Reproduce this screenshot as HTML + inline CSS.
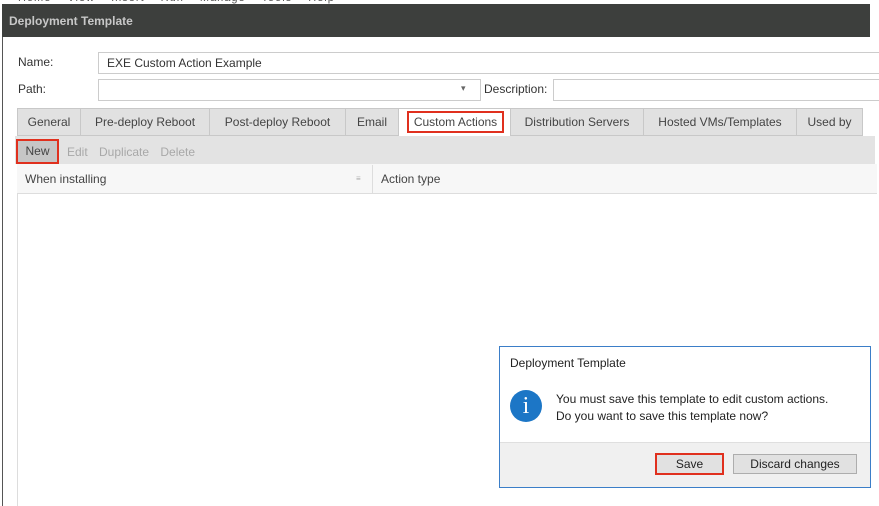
<!DOCTYPE html>
<html><head><style>
*{box-sizing:border-box;margin:0;padding:0}
body{width:879px;height:506px;background:#fff;font-family:"Liberation Sans",sans-serif;font-size:12px;color:#333;position:relative;overflow:hidden}
.a{position:absolute}
.tab{position:absolute;top:108px;height:28px;background:#e1e1e1;border:1px solid #c8c8c8;text-align:center;line-height:26px;color:#444}
</style></head><body>
<div class="a" style="left:0;top:0;width:879px;height:4px;overflow:hidden"><div style="position:absolute;top:-8px;left:18px;font-size:11px;color:#555;letter-spacing:1px;word-spacing:12px">Home View Insert Run Manage Tools Help</div></div>
<div class="a" style="left:2px;top:4px;width:868px;height:33px;background:#3d3f3d;color:#c8c8c8;font-weight:bold;font-size:12px;line-height:34px;padding-left:7px">Deployment Template</div>
<div class="a" style="left:2px;top:37px;width:1px;height:469px;background:#555"></div>
<div class="a" style="left:18px;top:55px">Name:</div>
<div class="a" style="left:98px;top:52px;width:790px;height:22px;border:1px solid #ccc;padding:3px 8px">EXE Custom Action Example</div>
<div class="a" style="left:18px;top:82px">Path:</div>
<div class="a" style="left:98px;top:79px;width:383px;height:22px;border:1px solid #ccc"></div>
<div class="a" style="left:461px;top:83px;font-size:9px;color:#666">▾</div>
<div class="a" style="left:484px;top:82px">Description:</div>
<div class="a" style="left:553px;top:79px;width:340px;height:22px;border:1px solid #ccc"></div>
<div class="tab" style="left:17px;width:64px">General</div>
<div class="tab" style="left:80px;width:130px">Pre-deploy Reboot</div>
<div class="tab" style="left:209px;width:137px">Post-deploy Reboot</div>
<div class="tab" style="left:345px;width:54px">Email</div>
<div class="tab" style="left:398px;width:113px;background:#fff;height:29px"></div>
<div class="a" style="left:407px;top:111px;width:97px;height:22px;border:2px solid #e0301e;line-height:18px;text-align:center;color:#444">Custom Actions</div>
<div class="tab" style="left:510px;width:134px">Distribution Servers</div>
<div class="tab" style="left:643px;width:154px">Hosted VMs/Templates</div>
<div class="tab" style="left:796px;width:67px">Used by</div>
<div class="a" style="left:15px;top:136px;width:860px;height:28px;background:#e3e3e3"></div>
<div class="a" style="left:16px;top:139px;width:43px;height:25px;background:#c6c6c6;border:2px solid #e0301e;line-height:21px;text-align:center;color:#444">New</div>
<div class="a" style="left:67px;top:145px;color:#a8a8a8;word-spacing:8px">Edit Duplicate Delete</div>
<div class="a" style="left:17px;top:164px;width:860px;height:30px;background:#f7f7f7;border-bottom:1px solid #ddd"></div>
<div class="a" style="left:25px;top:172px;color:#444">When installing</div>
<div class="a" style="left:356px;top:174px;font-size:8px;color:#aaa">≡</div>
<div class="a" style="left:372px;top:165px;width:1px;height:29px;background:#ddd"></div>
<div class="a" style="left:381px;top:172px;color:#444">Action type</div>
<div class="a" style="left:17px;top:194px;width:1px;height:312px;background:#ddd"></div>
<div class="a" style="left:499px;top:346px;width:372px;height:142px;border:1px solid #3b7ec8;background:#fff">
<div class="a" style="left:10px;top:9px;color:#222">Deployment Template</div>
<div class="a" style="left:10px;top:43px;width:32px;height:32px;border-radius:50%;background:#1c76c6;color:#fff;text-align:center;font-size:24px;line-height:32px;font-family:'Liberation Serif',serif">i</div>
<div class="a" style="left:56px;top:44px;color:#222;line-height:17px">You must save this template to edit custom actions.<br>Do you want to save this template now?</div>
<div class="a" style="left:0;top:95px;width:370px;height:45px;background:#f0f0f0;border-top:1px solid #dfdfdf"></div>
<div class="a" style="left:155px;top:106px;width:69px;height:22px;border:2px solid #e0301e;background:#e1e1e1;text-align:center;line-height:18px;color:#222">Save</div>
<div class="a" style="left:233px;top:107px;width:124px;height:20px;border:1px solid #adadad;background:#e1e1e1;text-align:center;line-height:18px;color:#222">Discard changes</div>
</div>
</body></html>
